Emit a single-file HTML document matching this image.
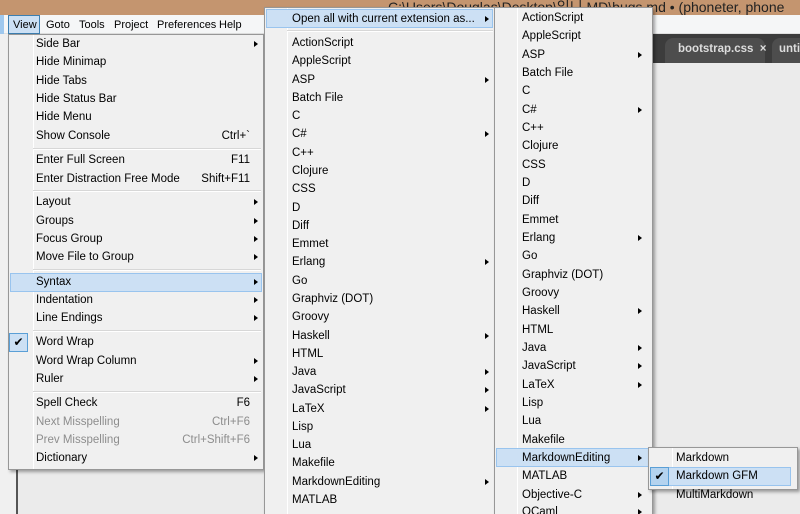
<!DOCTYPE html>
<html><head><meta charset="utf-8"><style>
*{margin:0;padding:0;box-sizing:border-box}
html,body{width:800px;height:514px;overflow:hidden}
body{position:relative;background:#ebebeb;font-family:"Liberation Sans","Noto Sans CJK KR",sans-serif;font-size:11.5px;color:#000}
.a{position:absolute}
.m{position:absolute;background:#f0f0f0;border:1px solid #979797;box-shadow:2px 2px 3px rgba(0,0,0,.35);overflow:hidden}
.col{position:absolute;top:0;bottom:0;width:1px;background:#e2e2e2;border-right:1px solid #fff}
.i{position:absolute;height:18px;line-height:18px;white-space:nowrap}
.hl{position:absolute;height:19px;background:#cce0f4;border:1px solid #99c4ee}
.ar{position:absolute;width:0;height:0;border-left:4px solid #000;border-top:3.5px solid transparent;border-bottom:3.5px solid transparent}
.sc{position:absolute;text-align:right;height:18px;line-height:18px}
.sep{position:absolute;height:2px;border-top:1px solid #d7d7d7;border-bottom:1px solid #fff}
.g{color:#8d8d8d}
.mb{position:absolute;top:16px;height:18px;line-height:18px;font-size:11px;white-space:nowrap}
</style></head><body>
<div class="a" style="left:0;top:0;width:800px;height:15px;background:#c4956f"></div>
<div class="a" style="left:388px;top:-3px;font-size:14px;color:#222;white-space:nowrap">C:\Users\Douglas\Desktop\일니 MD\bugs.md • (phoneter, phone</div>
<div class="a" style="left:0;top:15px;width:800px;height:19px;background:#f5f6f7;border-bottom:1px solid #e0e0e0"></div>
<div class="a" style="left:0;top:15px;width:4px;height:19px;background:#9fc8ee"></div>
<div class="a" style="left:8px;top:15px;width:32px;height:19px;background:#cce0f4;border:1px solid #3c7fb1"></div>
<div class="mb" style="left:13px">View</div>
<div class="mb" style="left:46px">Goto</div>
<div class="mb" style="left:79px">Tools</div>
<div class="mb" style="left:114px">Project</div>
<div class="mb" style="left:157px">Preferences</div>
<div class="mb" style="left:219px">Help</div>
<div class="a" style="left:640px;top:34px;width:160px;height:29px;background:#3c3c3c"></div>
<div class="a" style="left:665px;top:38px;width:100px;height:25px;background:#4d4d4d;border-radius:8px 8px 0 0"></div>
<div class="a" style="left:678px;top:43px;color:#ddd;font-size:11.5px;font-weight:bold">bootstrap.css&nbsp;&nbsp;×</div>
<div class="a" style="left:772px;top:38px;width:40px;height:25px;background:#4d4d4d;border-radius:8px 0 0 0"></div>
<div class="a" style="left:779px;top:43px;color:#ddd;font-weight:bold">untit</div>
<div class="a" style="left:0;top:34px;width:18px;height:480px;background:#f0f0f0;border-right:2px solid #555"></div>

<div class="m" style="left:8px;top:34px;width:256px;height:436px">
<div class="col" style="left:24px"></div>
</div>
<div class="sep" style="left:33px;top:148px;width:228px"></div>
<div class="sep" style="left:33px;top:190px;width:228px"></div>
<div class="sep" style="left:33px;top:269px;width:228px"></div>
<div class="sep" style="left:33px;top:330px;width:228px"></div>
<div class="sep" style="left:33px;top:391px;width:228px"></div>
<div class="hl" style="left:10px;top:273px;width:252px"></div>
<div class="a" style="left:9px;top:333px;width:19px;height:19px;background:#cce0f4;border:1px solid #5a9fd6;text-align:center;line-height:17px;font-size:12px">✔</div>
<div class="i" style="left:36px;top:35px">Side Bar</div><div class="ar" style="left:254px;top:41px"></div>
<div class="i" style="left:36px;top:53px">Hide Minimap</div>
<div class="i" style="left:36px;top:72px">Hide Tabs</div>
<div class="i" style="left:36px;top:90px">Hide Status Bar</div>
<div class="i" style="left:36px;top:108px">Hide Menu</div>
<div class="i" style="left:36px;top:127px">Show Console</div><div class="sc" style="left:190px;top:127px;width:60px">Ctrl+`</div>
<div class="i" style="left:36px;top:151px">Enter Full Screen</div><div class="sc" style="left:190px;top:151px;width:60px">F11</div>
<div class="i" style="left:36px;top:170px">Enter Distraction Free Mode</div><div class="sc" style="left:190px;top:170px;width:60px">Shift+F11</div>
<div class="i" style="left:36px;top:193px">Layout</div><div class="ar" style="left:254px;top:199px"></div>
<div class="i" style="left:36px;top:212px">Groups</div><div class="ar" style="left:254px;top:218px"></div>
<div class="i" style="left:36px;top:230px">Focus Group</div><div class="ar" style="left:254px;top:236px"></div>
<div class="i" style="left:36px;top:248px">Move File to Group</div><div class="ar" style="left:254px;top:254px"></div>
<div class="i" style="left:36px;top:273px">Syntax</div><div class="ar" style="left:254px;top:279px"></div>
<div class="i" style="left:36px;top:291px">Indentation</div><div class="ar" style="left:254px;top:297px"></div>
<div class="i" style="left:36px;top:309px">Line Endings</div><div class="ar" style="left:254px;top:315px"></div>
<div class="i" style="left:36px;top:333px">Word Wrap</div>
<div class="i" style="left:36px;top:352px">Word Wrap Column</div><div class="ar" style="left:254px;top:358px"></div>
<div class="i" style="left:36px;top:370px">Ruler</div><div class="ar" style="left:254px;top:376px"></div>
<div class="i" style="left:36px;top:394px">Spell Check</div><div class="sc" style="left:190px;top:394px;width:60px">F6</div>
<div class="i g" style="left:36px;top:413px">Next Misspelling</div><div class="sc g" style="left:170px;top:413px;width:80px">Ctrl+F6</div>
<div class="i g" style="left:36px;top:431px">Prev Misspelling</div><div class="sc g" style="left:170px;top:431px;width:80px">Ctrl+Shift+F6</div>
<div class="i" style="left:36px;top:449px">Dictionary</div><div class="ar" style="left:254px;top:455px"></div>

<div class="m" style="left:264px;top:7px;width:231px;height:507px;border-bottom:none">
<div class="col" style="left:22px"></div>
</div>
<div class="hl" style="left:266px;top:9px;width:227px"></div>
<div class="i" style="left:292px;top:10px">Open all with current extension as...</div><div class="ar" style="left:485px;top:16px"></div>
<div class="sep" style="left:287px;top:30px;width:206px"></div>
<div class="i" style="left:292px;top:34px">ActionScript</div>
<div class="i" style="left:292px;top:52.3px">AppleScript</div>
<div class="i" style="left:292px;top:70.6px">ASP</div><div class="ar" style="left:485px;top:76.6px"></div>
<div class="i" style="left:292px;top:88.8px">Batch File</div>
<div class="i" style="left:292px;top:107.1px">C</div>
<div class="i" style="left:292px;top:125.4px">C#</div><div class="ar" style="left:485px;top:131.4px"></div>
<div class="i" style="left:292px;top:143.7px">C++</div>
<div class="i" style="left:292px;top:162px">Clojure</div>
<div class="i" style="left:292px;top:180.2px">CSS</div>
<div class="i" style="left:292px;top:198.5px">D</div>
<div class="i" style="left:292px;top:216.8px">Diff</div>
<div class="i" style="left:292px;top:235.1px">Emmet</div>
<div class="i" style="left:292px;top:253.4px">Erlang</div><div class="ar" style="left:485px;top:259.4px"></div>
<div class="i" style="left:292px;top:271.6px">Go</div>
<div class="i" style="left:292px;top:289.9px">Graphviz (DOT)</div>
<div class="i" style="left:292px;top:308.2px">Groovy</div>
<div class="i" style="left:292px;top:326.5px">Haskell</div><div class="ar" style="left:485px;top:332.5px"></div>
<div class="i" style="left:292px;top:344.8px">HTML</div>
<div class="i" style="left:292px;top:363px">Java</div><div class="ar" style="left:485px;top:369px"></div>
<div class="i" style="left:292px;top:381.3px">JavaScript</div><div class="ar" style="left:485px;top:387.3px"></div>
<div class="i" style="left:292px;top:399.6px">LaTeX</div><div class="ar" style="left:485px;top:405.6px"></div>
<div class="i" style="left:292px;top:417.9px">Lisp</div>
<div class="i" style="left:292px;top:436.2px">Lua</div>
<div class="i" style="left:292px;top:454.4px">Makefile</div>
<div class="i" style="left:292px;top:472.7px">MarkdownEditing</div><div class="ar" style="left:485px;top:478.7px"></div>
<div class="i" style="left:292px;top:491px">MATLAB</div>

<div class="m" style="left:494px;top:7px;width:159px;height:507px;border-bottom:none">
<div class="col" style="left:22px"></div>
</div>
<div class="hl" style="left:496px;top:448px;width:155px"></div>
<div class="i" style="left:522px;top:9px">ActionScript</div>
<div class="i" style="left:522px;top:27.3px">AppleScript</div>
<div class="i" style="left:522px;top:45.7px">ASP</div><div class="ar" style="left:638px;top:51.7px"></div>
<div class="i" style="left:522px;top:64px">Batch File</div>
<div class="i" style="left:522px;top:82.3px">C</div>
<div class="i" style="left:522px;top:100.7px">C#</div><div class="ar" style="left:638px;top:106.7px"></div>
<div class="i" style="left:522px;top:119px">C++</div>
<div class="i" style="left:522px;top:137.3px">Clojure</div>
<div class="i" style="left:522px;top:155.7px">CSS</div>
<div class="i" style="left:522px;top:174px">D</div>
<div class="i" style="left:522px;top:192.3px">Diff</div>
<div class="i" style="left:522px;top:210.7px">Emmet</div>
<div class="i" style="left:522px;top:229px">Erlang</div><div class="ar" style="left:638px;top:235px"></div>
<div class="i" style="left:522px;top:247.3px">Go</div>
<div class="i" style="left:522px;top:265.7px">Graphviz (DOT)</div>
<div class="i" style="left:522px;top:284px">Groovy</div>
<div class="i" style="left:522px;top:302.3px">Haskell</div><div class="ar" style="left:638px;top:308.3px"></div>
<div class="i" style="left:522px;top:320.7px">HTML</div>
<div class="i" style="left:522px;top:339px">Java</div><div class="ar" style="left:638px;top:345px"></div>
<div class="i" style="left:522px;top:357.3px">JavaScript</div><div class="ar" style="left:638px;top:363.3px"></div>
<div class="i" style="left:522px;top:375.7px">LaTeX</div><div class="ar" style="left:638px;top:381.7px"></div>
<div class="i" style="left:522px;top:394px">Lisp</div>
<div class="i" style="left:522px;top:412.3px">Lua</div>
<div class="i" style="left:522px;top:430.7px">Makefile</div>
<div class="i" style="left:522px;top:449px">MarkdownEditing</div><div class="ar" style="left:638px;top:455px"></div>
<div class="i" style="left:522px;top:467.3px">MATLAB</div>
<div class="i" style="left:522px;top:485.7px">Objective-C</div><div class="ar" style="left:638px;top:491.7px"></div>
<div class="i" style="left:522px;top:503px">OCaml</div><div class="ar" style="left:638px;top:509px"></div>

<div class="m" style="left:648px;top:447px;width:150px;height:43px">
<div class="col" style="left:23px"></div>
</div>
<div class="hl" style="left:650px;top:467px;width:141px"></div>
<div class="a" style="left:650px;top:467px;width:19px;height:19px;background:#b4d3ef;border:1px solid #5a9fd6;text-align:center;line-height:17px;font-size:12px">✔</div>
<div class="i" style="left:676px;top:449px">Markdown</div>
<div class="i" style="left:676px;top:467px">Markdown GFM</div>
<div class="i" style="left:676px;top:486px">MultiMarkdown</div>
</body></html>
